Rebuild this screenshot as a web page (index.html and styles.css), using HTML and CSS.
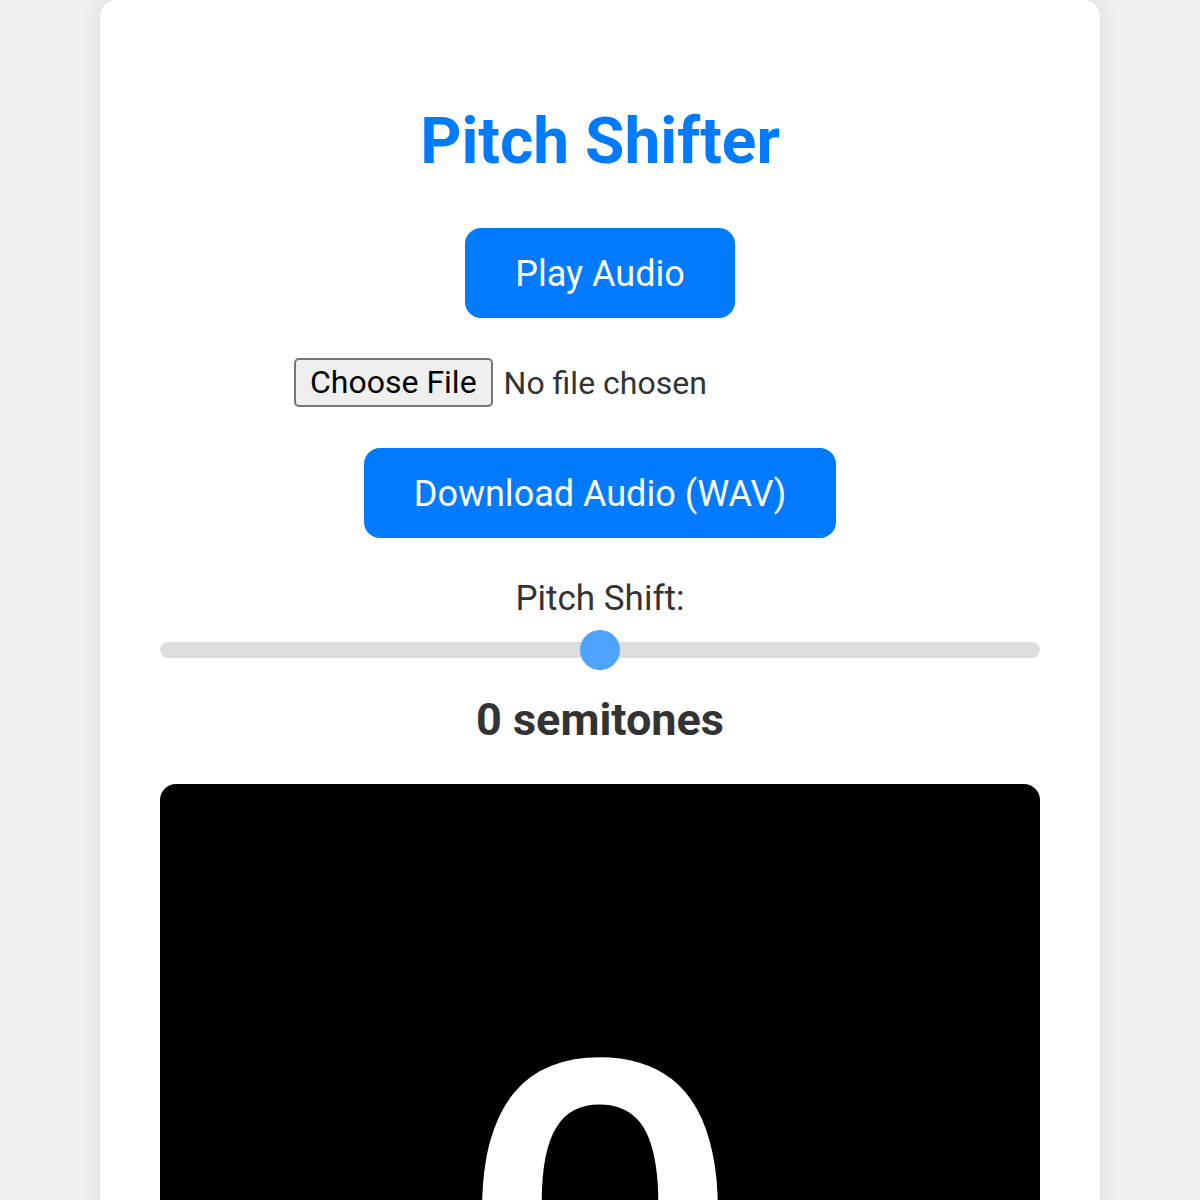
FILE: index.html
```html
<!DOCTYPE html>
<html>
  <head>
    <title>Pitch Shifter</title>
    <link rel="stylesheet" href="styles.css">
  </head>
  <body>
    <div class="container">
      <h1>Pitch Shifter</h1>

      <button class="btn">Play Audio</button>

      <div class="file-input">
        <span class="file-btn">Choose File</span>
        <span class="file-name">No file chosen</span>
      </div>

      <button class="btn">Download Audio (WAV)</button>

      <label class="pitch-label" for="pitch">Pitch Shift:</label>
      <input type="range" id="pitch" class="slider" min="-12" max="12" value="0">
      <div class="pitch-value">0 semitones</div>

      <div class="screen">
        <span class="big-num">0</span>
      </div>
    </div>
  </body>
</html>
```

FILE: styles.css
```css
body {
    font-family: Roboto, "Liberation Sans", sans-serif;
    background: #f0f0f0;
    margin: 0;
    color: #333;
}
/* main white card */
.container {
    width: 880px;
    margin: 0 auto;
    padding: 60px;
    background: #fff;
    border-radius: 16px;
    box-shadow: 0 0 20px rgba(0, 0, 0, 0.1);
    display: flex;
    flex-direction: column;
    align-items: center;
}
h1 {
    color: #007bff;
    font-size: 64px;
    font-weight: 700;
    line-height: 75px;
    margin: 44px 0 49px;
}
.btn {
    font-family: Roboto, sans-serif;
    background: #007bff;
    color: #fff;
    border: none;
    border-radius: 16px;
    font-size: 36px;
    line-height: 38px;
    padding: 27px 50px 25px;
}
.file-input {
    width: 612px;
    display: flex;
    align-items: center;
    margin: 40px 0 41px;
    font-size: 32px;
}
.file-btn {
    background: #efefef;
    border: 2px solid #767676;
    border-radius: 5px;
    color: #000;
    padding: 3px 14px;
    line-height: 39px;
}
.file-name {
    margin-left: 11px;
}
.pitch-label {
    font-size: 35px;
    line-height: 41px;
    margin-top: 40px;
}
.slider {
    -webkit-appearance: none;
    appearance: none;
    width: 880px;
    height: 16px;
    margin: 23px 0 0;
    background: #ddd;
    border-radius: 8px;
}
.slider::-webkit-slider-thumb {
    -webkit-appearance: none;
    width: 40px;
    height: 40px;
    border-radius: 50%;
    background: #4da3ff;
    border: none;
}
.pitch-value {
    font-size: 45px;
    font-weight: 700;
    line-height: 53px;
    margin-top: 35px;
}
.screen {
    width: 880px;
    height: 900px;
    margin-top: 38px;
    background: #000;
    border-radius: 16px;
    display: flex;
    justify-content: center;
    padding-top: 213px;
    box-sizing: border-box;
}
.big-num {
    color: #fff;
    font-family: Roboto, sans-serif;
    font-weight: 500;
    font-size: 506px;
    line-height: 1;
}
```
